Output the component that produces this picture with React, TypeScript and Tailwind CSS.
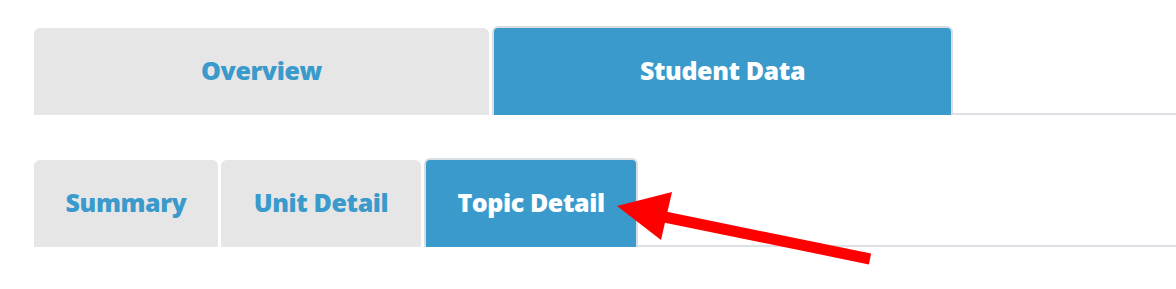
import React from "react";

type Tab = { label: string; width: string; active?: boolean };

const topTabs: Tab[] = [
  { label: "Overview", width: "w-[455px]" },
  { label: "Student Data", width: "w-[461px]", active: true },
];

const subTabs: Tab[] = [
  { label: "Summary", width: "w-[184px]" },
  { label: "Unit Detail", width: "w-[200px]" },
  { label: "Topic Detail", width: "w-[214px]", active: true },
];

function TabRow({ tabs }: { tabs: Tab[] }) {
  return (
    <div className="flex items-end">
      {tabs.map((t, i) => (
        <div
          key={t.label}
          className={
            (t.active
              ? "h-[89px] rounded-t-[6px] border-2 border-b-0 border-[#d9dee3] bg-[#3a9acb] text-white "
              : "h-[87px] rounded-t-[6px] bg-[#e6e6e6] text-[#3a9acb] ") +
            t.width +
            (i > 0 ? " ml-[3px]" : "") +
            " flex shrink-0 items-center justify-center pb-[2px] text-[25px] font-extrabold tracking-[-0.4px]"
          }
        >
          {t.label}
        </div>
      ))}
      <div className="flex-1 border-b-2 border-[#dde1e5]" />
    </div>
  );
}

export default function App() {
  return (
    <div
      className="relative h-[289px] w-[1176px] overflow-hidden bg-white pl-[34px] pt-[26px]"
      style={{ fontFamily: "'Open Sans', Lato, sans-serif" }}
    >
      <TabRow tabs={topTabs} />
      <div className="mt-[43px]">
        <TabRow tabs={subTabs} />
      </div>
      <svg
        className="absolute left-0 top-0"
        width="1176"
        height="289"
        viewBox="0 0 1176 289"
      >
        <line x1="650" y1="214" x2="870" y2="259" stroke="#ff0000" strokeWidth="11" />
        <polygon points="617,206 672,192 661,240" fill="#ff0000" />
      </svg>
    </div>
  );
}
